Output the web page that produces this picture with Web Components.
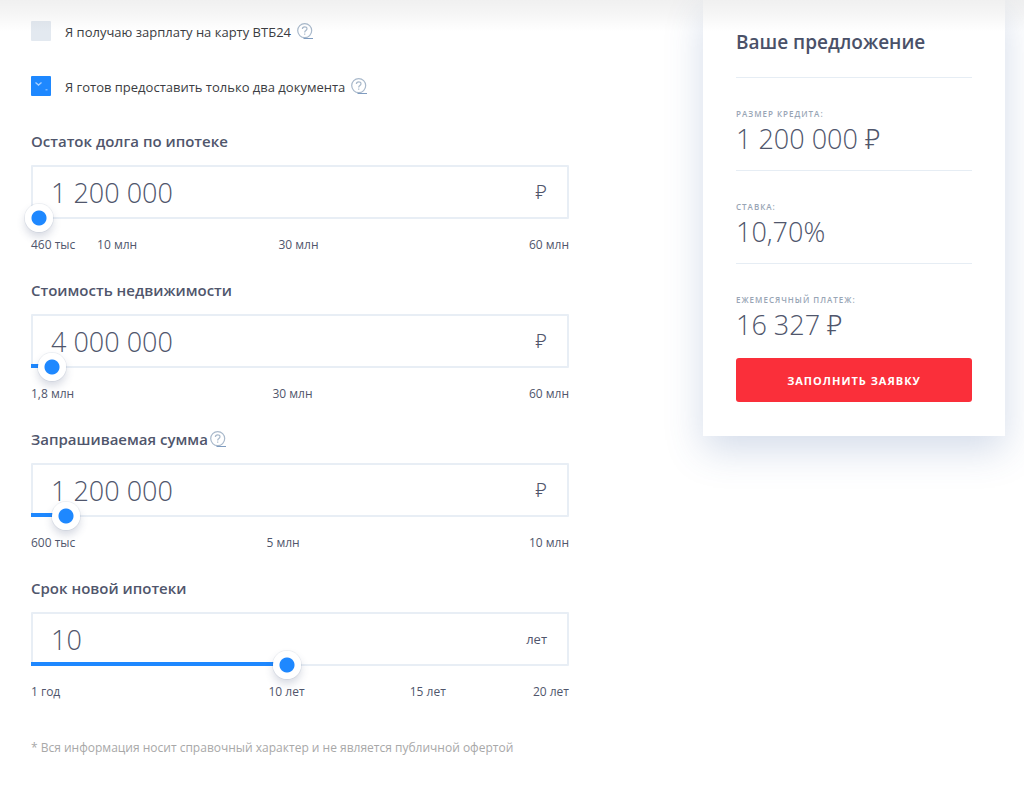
<!DOCTYPE html>
<html lang="ru">
<head>
<meta charset="utf-8">
<meta name="viewport" content="width=device-width, initial-scale=1">
<title>Ипотечный калькулятор</title>
<style>
  body { margin: 0; background: #fff; color: #50566c; font-family: "Open Sans", "Noto Sans", sans-serif; }
</style>
</head>
<body>
<loan-page>
  <check-option name="salary">Я получаю зарплату на карту ВТБ24</check-option>
  <check-option name="documents" checked>Я готов предоставить только два документа</check-option>
  <range-field label="Остаток долга по ипотеке" value="1 200 000" unit="₽" min="460000" max="60000000"
    marks="460 тыс|10 млн|30 млн|60 млн" columns="66fr 181fr 251fr 39fr"></range-field>
  <range-field label="Стоимость недвижимости" value="4 000 000" unit="₽" min="1800000" max="60000000"
    marks="1,8 млн|30 млн|60 млн" columns="241fr 257fr 39fr"></range-field>
  <range-field label="Запрашиваемая сумма" value="1 200 000" unit="₽" min="600000" max="10000000" help
    marks="600 тыс|5 млн|10 млн" columns="235fr 263fr 39fr"></range-field>
  <range-field label="Срок новой ипотеки" value="10" unit="лет" min="1" max="20"
    marks="1 год|10 лет|15 лет|20 лет" columns="237fr 141fr 124fr 35fr"></range-field>
  <span slot="note">* Вся информация носит справочный характер и не является публичной офертой</span>
  <offer-card slot="offer" heading="Ваше предложение">
    <offer-item label="Размер кредита:">1 200 000 ₽</offer-item>
    <offer-item label="Ставка:">10,70%</offer-item>
    <offer-item label="Ежемесячный платеж:">16 327 ₽</offer-item>
    <span slot="action">Заполнить заявку</span>
  </offer-card>
</loan-page>

<script>
class BaseElement extends HTMLElement {
  connectedCallback() {
    if (this.shadowRoot) return;
    this.attachShadow({ mode: 'open' }).innerHTML = this.render();
    this.ready();
  }
  ready() {}
}

customElements.define('help-tip', class extends BaseElement {
  render() {
    return `<style>
      :host { display: block; width: 16px; height: 18px; flex: none; }
      button { display: block; width: 16px; height: 18px; padding: 0; border: 0; background: none; cursor: pointer; }
      svg { display: block; }
    </style>
    <button type="button" aria-label="Подсказка"><svg width="16" height="18" viewBox="0 0 16 18" fill="none">
      <circle cx="7.7" cy="7.6" r="7" stroke="#a9b9cb" stroke-width="1.2"/>
      <path d="M5.4 6C5.4 3.1 10 3.1 10 5.8c0 1.8-2.3 1.7-2.3 3.6M7.7 10.4v1.3" stroke="#a9b9cb" stroke-width="1.2"/>
      <path d="M6.5 15.5H16" stroke="#7f9cc0"/>
    </svg></button>`;
  }
});

customElements.define('check-option', class extends BaseElement {
  render() {
    return `<style>
      :host { display: flex; align-items: flex-start; gap: 6px; height: 24px; margin-bottom: 31px; }
      label { display: flex; gap: 14px; font-size: 13px; line-height: 24px; color: #3b3d42; cursor: pointer; }
      .box { display: grid; width: 20px; height: 20px; margin-top: 1px; flex: none; }
      input, svg { grid-area: 1 / 1; }
      input { appearance: none; width: 20px; height: 20px; margin: 0; border-radius: 1px; background: #e3e9f0; cursor: pointer; }
      input:checked { background: #1e88ff; }
      svg { visibility: hidden; pointer-events: none; }
      input:checked + svg { visibility: visible; }
      help-tip { margin-top: 3px; }
    </style>
    <label><span class="box"><input type="checkbox" name="${this.getAttribute('name')}" ${this.hasAttribute('checked') ? 'checked' : ''}>
      <svg width="20" height="20" viewBox="0 0 20 20"><path d="M4.5 6.5l3 2.6 3-2.6" fill="none" stroke="#a9d0ff" stroke-width="1.3"/><path d="M14.5 13h2v1.5h-2z" fill="#7db9ff"/></svg></span>
      <slot></slot></label>
    <help-tip></help-tip>`;
  }
});

customElements.define('range-field', class extends BaseElement {
  render() {
    const a = n => this.getAttribute(n);
    const value = Number(a('value').replace(/\s/g, ''));
    return `<style>
      :host { display: block; margin-bottom: 24px; }
      .title { display: flex; align-items: flex-start; gap: 2px; height: 24px; margin-bottom: 11px; font-size: 15px; line-height: 22px; font-weight: 600; }
      .title help-tip { margin-top: 3px; }
      .box { position: relative; display: flex; align-items: center; box-sizing: border-box; height: 54px; padding: 0 20px 0 18px; border: 2px solid #e8eef5; border-radius: 1px; }
      .amount { flex: 1; min-width: 0; height: 50px; padding: 0; border: 0; outline: 0; background: none; font: 300 27px "Open Sans", "Noto Sans", sans-serif; color: #50566c; }
      .unit { font-size: 20px; font-weight: 300; line-height: 24px; }
      .unit.word { font-size: 13px; font-weight: 400; }
      .fill { position: absolute; left: -2px; bottom: -2px; height: 4px; width: var(--share); background: #1e88ff; }
      .slider { position: absolute; left: -15px; bottom: -15px; width: calc(100% + 32px); height: 28px; margin: 0; appearance: none; background: none; pointer-events: none; }
      .slider::-webkit-slider-runnable-track { height: 28px; background: none; }
      .slider::-webkit-slider-thumb { appearance: none; width: 28px; height: 28px; border-radius: 50%; pointer-events: auto; cursor: pointer;
        background: radial-gradient(circle, #1e88ff 7px, #fff 8px); box-shadow: 0 0 0 1px rgba(70, 85, 130, .08), 0 5px 8px rgba(50, 65, 110, .2); }
      .marks { display: grid; grid-template-columns: ${a('columns')}; margin-top: 16px; font-size: 12px; line-height: 20px; }
      .marks span { min-width: 0; white-space: nowrap; }
      .marks span:last-child { justify-self: end; }
    </style>
    <div class="title"><label for="amount">${a('label')}</label>${this.hasAttribute('help') ? '<help-tip></help-tip>' : ''}</div>
    <div class="box">
      <input class="amount" id="amount" type="text" inputmode="numeric" value="${a('value')}">
      <span class="unit ${a('unit').length > 1 ? 'word' : ''}">${a('unit')}</span>
      <div class="fill"></div>
      <input class="slider" type="range" aria-label="${a('label')}" min="${a('min')}" max="${a('max')}" value="${value}">
    </div>
    <div class="marks">${a('marks').split('|').map(m => `<span>${m}</span>`).join('')}</div>`;
  }
  ready() {
    const slider = this.shadowRoot.querySelector('.slider');
    const amount = this.shadowRoot.querySelector('.amount');
    const paint = () => this.style.setProperty('--share', (slider.value - slider.min) / (slider.max - slider.min) * 100 + '%');
    slider.addEventListener('input', () => {
      amount.value = slider.value.replace(/\B(?=(\d{3})+$)/g, ' ');
      paint();
    });
    amount.addEventListener('change', () => {
      slider.value = amount.value.replace(/\s/g, '');
      paint();
    });
    paint();
  }
});

customElements.define('offer-item', class extends BaseElement {
  render() {
    return `<style>
      :host { display: block; padding: 28px 0 14px; border-top: 1px solid #e6edf4; }
      .label { font-size: 8px; line-height: 16px; font-weight: 600; text-transform: uppercase; letter-spacing: 1px; color: #98a5b5; }
      .value { font-size: 27px; line-height: 34px; font-weight: 300; }
    </style>
    <div class="label">${this.getAttribute('label')}</div>
    <div class="value"><slot></slot></div>`;
  }
});

customElements.define('offer-card', class extends BaseElement {
  render() {
    return `<style>
      :host { display: block; padding: 28px 33px 34px; background: #fff; box-shadow: 0 14px 36px rgba(60, 95, 160, .22); }
      h2 { margin: 0 0 20px; font-size: 19px; line-height: 29px; font-weight: 600; color: #4a5168; }
      button { display: block; width: 100%; height: 44px; margin: 2px 0 0; padding: 0; border: 0; border-radius: 3px; background: #fa2f3a; color: #fff; cursor: pointer;
        font: 700 11px "Open Sans", "Noto Sans", sans-serif; letter-spacing: 1px; text-transform: uppercase; }
    </style>
    <h2>${this.getAttribute('heading')}</h2>
    <slot></slot>
    <button type="button"><slot name="action"></slot></button>`;
  }
});

customElements.define('loan-page', class extends BaseElement {
  render() {
    return `<style>
      :host { position: relative; display: grid; grid-template-columns: minmax(0, 1fr) 302px; column-gap: 134px; align-items: start; padding: 0 19px 32px 31px; }
      :host::after { content: ""; position: absolute; inset: 0 0 auto; height: 32px; background: linear-gradient(rgba(0, 0, 0, .06), rgba(0, 0, 0, .04) 40%, transparent); pointer-events: none; }
      main { padding-top: 20px; }
      footer { margin-top: 36px; font-size: 12px; line-height: 20px; color: #a8a8a8; }
    </style>
    <main><slot></slot><footer><slot name="note"></slot></footer></main>
    <aside><slot name="offer"></slot></aside>`;
  }
});
</script>
</body>
</html>
